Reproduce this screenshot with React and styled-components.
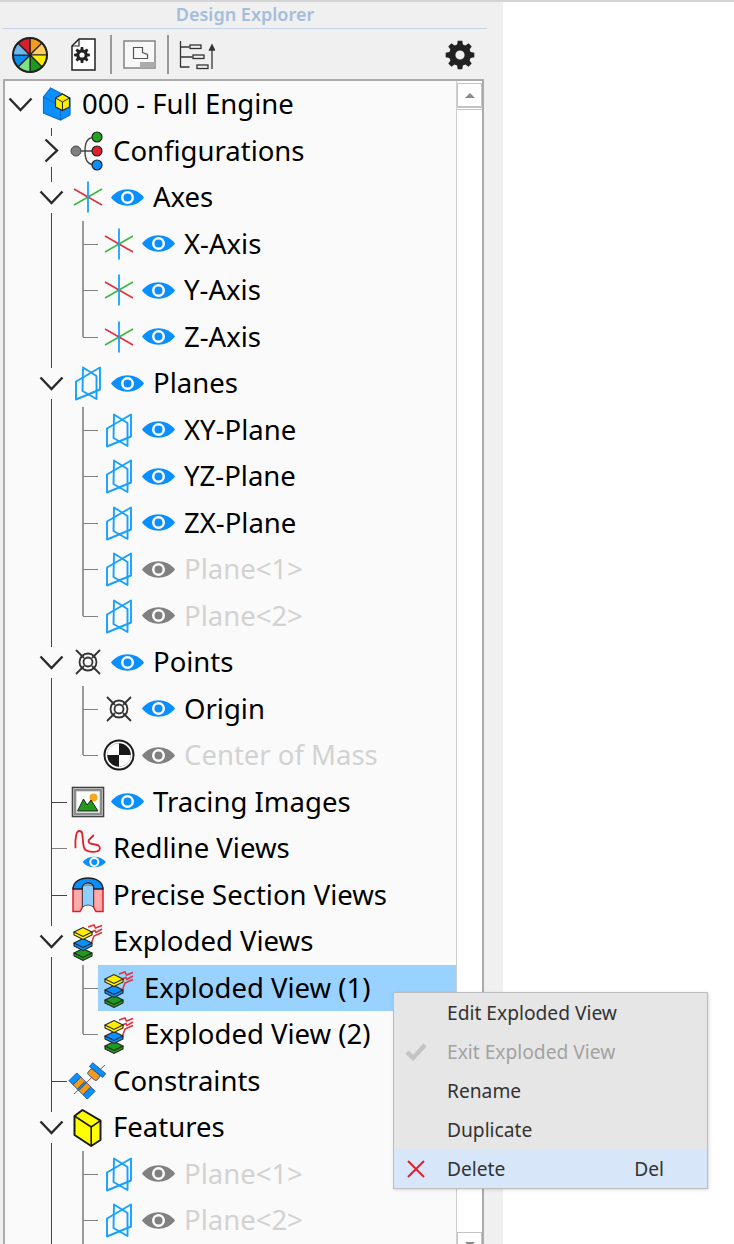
import React from "react";
import styled, { createGlobalStyle } from "styled-components";

const GlobalStyle = createGlobalStyle`
  html, body { margin: 0; padding: 0; background: #fff; }
  body { font-family: "Noto Sans", "Liberation Sans", sans-serif; }
`;

const BLUE = "#0a8fff";

function gearPath(cx, cy, ro, ri, hole, teeth = 8) {
  let d = "";
  const step = (Math.PI * 2) / teeth;
  for (let i = 0; i < teeth; i++) {
    const a = i * step;
    const pts = [
      [ri, a - step * 0.34],
      [ro, a - step * 0.2],
      [ro, a + step * 0.2],
      [ri, a + step * 0.34],
    ];
    pts.forEach(([r, t], j) => {
      const x = (cx + r * Math.sin(t)).toFixed(2);
      const y = (cy - r * Math.cos(t)).toFixed(2);
      d += `${i === 0 && j === 0 ? "M" : "L"}${x} ${y} `;
    });
  }
  d += `Z M${cx - hole} ${cy} a${hole} ${hole} 0 1 0 ${hole * 2} 0 a${hole} ${hole} 0 1 0 ${-hole * 2} 0 Z`;
  return d;
}

function wedge(r, from, to) {
  const p = (a) => {
    const t = (a * Math.PI) / 180;
    return `${(r * Math.sin(t)).toFixed(2)} ${(-r * Math.cos(t)).toFixed(2)}`;
  };
  return `M0 0 L${p(from)} A${r} ${r} 0 0 1 ${p(to)} Z`;
}

const WHEEL = ["#f59a1b", "#ffd060", "#ffee00", "#1c9a1c", "#7de38a", "#0a8cf0", "#6cb8f4", "#d4202a"];

function WheelIcon() {
  return (
    <svg width="38" height="38" viewBox="-19 -19 38 38">
      {WHEEL.map((c, i) => (
        <path key={c} d={wedge(17, i * 45, (i + 1) * 45)} fill={c} stroke="#222" strokeWidth="1.2" />
      ))}
      <circle r="17" fill="none" stroke="#222" strokeWidth="2" />
    </svg>
  );
}

function DocIcon() {
  return (
    <svg width="25" height="33" viewBox="0 0 25 33">
      <path d="M8 1h16v31H1V8z" fill="#fff" stroke="#222" strokeWidth="1.5" />
      <path d="M8 1v7H1" fill="none" stroke="#222" strokeWidth="1.2" />
      <path d={gearPath(11, 17, 8, 5.8, 2.6)} fill="#222" fillRule="evenodd" />
    </svg>
  );
}

function LayoutIcon() {
  return (
    <svg width="33" height="29" viewBox="0 0 33 29">
      <rect x="1" y="1" width="31" height="27" fill="#f8f8f8" stroke="#8a8a8a" strokeWidth="1.6" />
      <path d="M10.500 7.500h9v5l5 2v4h-14z" fill="none" stroke="#555" strokeWidth="1.2" />
      <rect x="17" y="22" width="15" height="5.500" fill="#ababab" />
    </svg>
  );
}

function TreeSortIcon() {
  return (
    <svg width="36" height="30" viewBox="0 0 36 30" fill="none" stroke="#333" strokeWidth="1.3">
      <path d="M1.500 1v26h9M1.500 7h9M1.500 17h12" />
      <rect x="11" y="5" width="11" height="3.500" />
      <rect x="14" y="15" width="11" height="3.500" />
      <rect x="18" y="25" width="11" height="3.500" />
      <path d="M33 29V8" />
      <path d="M30.500 10l2.500-5 2.500 5z" fill="#333" />
    </svg>
  );
}

function SettingsIcon() {
  return (
    <svg width="30" height="30" viewBox="0 0 30 30">
      <path d={gearPath(15, 15, 14.5, 11, 4.6)} fill="#222" fillRule="evenodd" />
    </svg>
  );
}

const Glyph = styled.svg`
  flex-shrink: 0;
  overflow: visible;
`;

function Icon({ children }) {
  return (
    <Glyph width="48" height="46" viewBox="-24 -23 48 46">
      {children}
    </Glyph>
  );
}

function PartIcon() {
  return (
    <Icon>
      <path d="M-6.500 -16L-13.500 -7V9L3.500 16L13 11V-6z" fill={BLUE} stroke="#0a6fc8" strokeWidth="1.2" />
      <path d="M-13.500 -7L3.500 2V16" fill="none" stroke="#0868bd" strokeWidth="1" />
      <path d="M5.500 -10L-1.500 -6V3L5.500 6.500L12.500 3V-6z" fill="#ffee00" stroke="#222" strokeWidth="1.2" />
      <path d="M-1.500 -6L5.500 -2L12.500 -6M5.500 -2V6.500" fill="none" stroke="#222" strokeWidth="1" />
    </Icon>
  );
}

function ConfigIcon() {
  return (
    <Icon>
      <path d="M-12 0H-3M-3 0C-3 -10 0 -14 8 -14M-3 0H8M-3 0C-3 10 0 14 8 14" fill="none" stroke="#444" strokeWidth="1.4" />
      <circle cx="-12" cy="0" r="5" fill="#808080" stroke="#444" strokeWidth="1" />
      <circle cx="9" cy="-14" r="5" fill="#22a31e" stroke="#222" strokeWidth="1.2" />
      <circle cx="9" cy="0" r="5" fill="#e0202a" stroke="#222" strokeWidth="1.2" />
      <circle cx="9" cy="14" r="5" fill={BLUE} stroke="#222" strokeWidth="1.2" />
    </Icon>
  );
}

function AxisIcon() {
  return (
    <Icon>
      <path d="M-14 8L14 -8" stroke="#3cb83c" strokeWidth="1.6" />
      <path d="M-14 -8L14 8" stroke="#e0303c" strokeWidth="1.6" />
      <path d="M0 -15.500V15.500" stroke="#18a0ff" strokeWidth="1.8" />
    </Icon>
  );
}

function PlaneIcon() {
  return (
    <Icon>
      <g fill="none" stroke="#18a0ff" strokeWidth="1.9" strokeLinejoin="round">
        <path d="M-12 -1.500L12 -15.500V6.500L-12 16.500z" />
        <path d="M-5 -15.500L8.500 -7V16L-5.500 8z" />
      </g>
    </Icon>
  );
}

function PointIcon() {
  return (
    <Icon>
      <g fill="none" stroke="#333" strokeWidth="1.8">
        <circle r="8.500" />
        <circle r="4.500" />
        <path d="M-12 -12L-4 -4M12 -12L4 -4M-12 12L-4 4M12 12L4 4" />
      </g>
    </Icon>
  );
}

function MassIcon() {
  return (
    <Icon>
      <circle r="15.500" fill="#1a1a1a" />
      <circle r="13.500" fill="#fff" />
      <circle r="11.800" fill="#1a1a1a" />
      <path d="M0 0V-11.800A11.800 11.800 0 0 0 -11.800 0z" fill="#fff" />
      <path d="M0 0V11.800A11.800 11.800 0 0 0 11.800 0z" fill="#fff" />
    </Icon>
  );
}

function ImageIcon() {
  return (
    <Icon>
      <rect x="-15.500" y="-14.500" width="31" height="29" fill="#fff" stroke="#444" strokeWidth="1.6" />
      <rect x="-13" y="-12" width="26" height="24" fill="#fff" stroke="#8c8c8c" strokeWidth="2.600" />
      <circle cx="5.500" cy="-4.500" r="4" fill="#f7a81b" />
      <path d="M-10.500 9L-4.500 -3L-1 3L3 -2L10 9z" fill="#1f9a1c" stroke="#222" strokeWidth="1" />
    </Icon>
  );
}

function RedlineIcon() {
  return (
    <Icon>
      <path
        d="M-12.500 0.300C-13 -6 -12.500 -10 -11.800 -13C-11 -16 -10 -17 -9 -17C-7 -17 -6 -16 -5.800 -14.700L-4.800 -4.700C-4.500 -1 -3.500 1 -2.500 2C0 3.700 4 4 7.500 3.700C10 3.400 11.800 2 11.800 0.300C11.800 -2 10 -3 9.200 -3L1.800 -4.700C0.500 -5.500 0.500 -7 0.800 -8L5.800 -13"
        fill="none"
        stroke="#e0202c"
        strokeWidth="1.800"
      />
      <path d="M-5.500 14C0 7 12 7 18 14C12 21 0 21 -5.500 14z" fill={BLUE} />
      <circle cx="6.300" cy="14" r="5" fill="#fff" />
      <circle cx="6.300" cy="14" r="3" fill={BLUE} />
    </Icon>
  );
}

function SectionIcon() {
  return (
    <Icon>
      <path d="M-15 -7H-5.500V12L-8 16.500H-15z" fill="#ffaaaa" stroke="#d8202c" strokeWidth="1.5" />
      <path d="M15 -7H5.500V12L8 16.500H15z" fill="#ffaaaa" stroke="#d8202c" strokeWidth="1.5" />
      <path d="M-5.500 -10H5.500V12Q0 8 -5.500 12z" fill="#8fcfff" stroke="#333" strokeWidth="0.8" />
      <path d="M-15 -6C-15 -13 -8 -17 0 -17C8 -17 15 -13 15 -6H6C6 -10 3 -12 0 -12C-3 -12 -6 -10 -6 -6z" fill={BLUE} stroke="#222" strokeWidth="1.300" />
    </Icon>
  );
}

function Slab({ cy, color }) {
  return (
    <g transform={`translate(-5 ${cy})`}>
      <path d="M-9 0V3L0 7.500L9 3V0" fill={color} stroke="#222" strokeWidth="1.1" />
      <path d="M-9 0L0 -4.500L9 0L0 4.500z" fill={color} stroke="#222" strokeWidth="1.1" />
    </g>
  );
}

function ExplodedIcon() {
  return (
    <Icon>
      <g fill="none" stroke="#e0303c" strokeWidth="1.500">
        <path d="M0 -14L6 -16L7.500 -13L14 -15.500" />
        <path d="M1 -8L7 -10.500L8 -8.500L14 -12" />
        <path d="M3.500 1.700L6 -5L14 -8.500" />
      </g>
      <Slab cy={12} color="#1f9a1c" />
      <Slab cy={2} color={BLUE} />
      <Slab cy={-9} color="#ffee00" />
    </Icon>
  );
}

function ConstraintIcon() {
  return (
    <Icon>
      <path d="M-14 13L17 -16" stroke="#e0303c" strokeWidth="1" />
      <g stroke="#1b4f80" strokeWidth="0.8">
        <g transform="translate(-6 5) rotate(45)">
          <rect x="-13" y="-5.500" width="6" height="11" fill={BLUE} />
          <rect x="-7" y="-5.500" width="6" height="11" fill="#f59a1b" />
          <rect x="-1" y="-5.500" width="2" height="11" fill={BLUE} />
          <rect x="1" y="-5.500" width="6" height="11" fill="#f59a1b" />
          <rect x="7" y="-5.500" width="6" height="11" fill={BLUE} />
        </g>
        <g transform="translate(8 -9) rotate(40)">
          <rect x="-6" y="0" width="12" height="7" rx="2" fill="#f59a1b" />
          <rect x="-8.500" y="-5" width="17" height="5" fill={BLUE} />
        </g>
      </g>
    </Icon>
  );
}

function FeatureIcon() {
  return (
    <Icon>
      <path d="M-5.500 -17L-13.500 -11V8L3.200 19L12.500 13V-6.300z" fill="#ffff00" stroke="#1a1a1a" strokeWidth="2" strokeLinejoin="round" />
      <path d="M-13.500 -11L3.200 0L12.500 -6.300M3.200 0V19" fill="none" stroke="#1a1a1a" strokeWidth="1.600" />
    </Icon>
  );
}

function Eye({ $off }) {
  const fill = $off ? "#808080" : BLUE;
  return (
    <svg width="33" height="17" viewBox="0 0 33 17">
      <path d="M0 8.500C8 -2.500 25 -2.500 33 8.500C25 19.500 8 19.500 0 8.500z" fill={fill} />
      <circle cx="16.500" cy="8.500" r="6.500" fill="#fff" />
      <circle cx="16.500" cy="8.500" r="4" fill={fill} />
    </svg>
  );
}

const Page = styled.div`
  height: 100vh;
  overflow: hidden;
  border-top: 2px solid #d4d4d4;
  box-sizing: border-box;
  position: relative;
`;

const Panel = styled.div`
  width: 503px;
  height: 1258px;
  box-sizing: border-box;
  padding: 0 19px 0 3px;
  background: #f0f0f0;
  display: flex;
  flex-direction: column;
`;

const Title = styled.div`
  height: 26px;
  margin-right: -3px;
  border-bottom: 1px solid #c5d3e6;
  text-align: center;
  font-size: 18px;
  font-weight: 600;
  line-height: 25px;
  color: #a3bedd;
`;

const Toolbar = styled.div`
  height: 50px;
  box-sizing: border-box;
  padding-top: 1px;
  display: flex;
  align-items: center;
`;

const ToolSlot = styled.div`
  display: flex;
  margin-left: ${(p) => p.$gap}px;
`;

const ToolGear = styled.div`
  display: flex;
  margin-left: auto;
  margin-right: 9px;
`;

const ToolDivider = styled.div`
  width: 2px;
  height: 39px;
  background: #9a9a9a;
  margin-left: ${(p) => p.$gap}px;
`;

const TreeBox = styled.div`
  flex: 1;
  min-height: 0;
  display: flex;
  border: 2px solid #ababab;
  background: #fafafa;
`;

const List = styled.div`
  flex: 1;
  min-width: 0;
  overflow: hidden;
`;

const ScrollBar = styled.div`
  width: 26px;
  box-sizing: border-box;
  flex-shrink: 0;
  background: #fff;
  border-left: 1px solid #cfcfcf;
  padding: 2px 0 1px;
  display: flex;
  flex-direction: column;
`;

const ScrollButton = styled.div`
  height: 25px;
  flex-shrink: 0;
  box-sizing: border-box;
  border: 1px solid #c4c4c4;
  border-bottom-width: 2px;
  background: #fff;
  display: flex;
  align-items: center;
  justify-content: center;
  &::after {
    content: "";
    border-left: 5px solid transparent;
    border-right: 5px solid transparent;
    border-${(p) => (p.$down ? "top" : "bottom")}: 5px solid #8a8a8a;
  }
`;

const ScrollTrack = styled.div`
  flex: 1;
  margin-top: 1px;
  border-top: 1px solid #c4c4c4;
  border-bottom: 1px solid #fff;
`;

const RowShell = styled.div`
  position: relative;
  height: 46.5px;
  display: flex;
  padding-left: ${(p) => p.$level * 31}px;
`;

const ChevronSlot = styled.div`
  width: 31px;
  flex-shrink: 0;
  display: flex;
  align-items: center;
  justify-content: center;
`;

const RowBody = styled.div`
  flex: 1;
  min-width: 0;
  display: flex;
  align-items: center;
  background: ${(p) => (p.$selected ? "#99d1ff" : "transparent")};
`;

const IconSlot = styled.div`
  width: 41px;
  flex-shrink: 0;
  display: flex;
  align-items: center;
  justify-content: center;
`;

const EyeSlot = styled.div`
  width: 40px;
  box-sizing: border-box;
  flex-shrink: 0;
  padding-left: 3px;
  display: flex;
  align-items: center;
`;

const Label = styled.span`
  margin-left: 5px;
  font-size: 27.5px;
  line-height: 44px;
  white-space: nowrap;
  color: ${(p) => (p.$muted ? "#d2d2d2" : "#000")};
`;

const Rail = styled.div`
  position: absolute;
  left: ${(p) => (p.$inner ? 77 : 46)}px;
  width: ${(p) => (p.$inner ? 2 : 1)}px;
  top: ${(p) => p.$top};
  bottom: ${(p) => p.$bottom};
  background: ${(p) => (p.$inner ? "#9a9a9a" : "#444")};
`;

const Stub = styled.div`
  position: absolute;
  top: 50%;
  height: 1px;
  left: ${(p) => (p.$inner ? 78 : 47)}px;
  width: 15px;
  background: ${(p) => (p.$inner || p.$soft ? "#808080" : "#444")};
`;

const Menu = styled.div`
  position: absolute;
  left: 393px;
  top: 990px;
  width: 315px;
  box-sizing: border-box;
  border: 1px solid #bdbdbd;
  background: #e6e6e6;
  box-shadow: 1px 1px 3px rgba(0, 0, 0, 0.15);
`;

const MenuItem = styled.div`
  height: 39px;
  display: flex;
  align-items: center;
  font-size: 19.2px;
  padding-left: 1px;
  color: ${(p) => (p.$disabled ? "#a2a2a2" : "#333")};
  background: ${(p) => (p.$active ? "#d8e6f9" : "transparent")};
`;

const MenuIcon = styled.div`
  width: 42px;
  margin-right: 10px;
  flex-shrink: 0;
  display: flex;
  justify-content: center;
`;

const MenuShortcut = styled.span`
  margin-left: auto;
  margin-right: 43px;
`;

const ROWS = [
  { level: 0, chevron: "down", Art: PartIcon, label: "000 - Full Engine" },
  { level: 1, chevron: "right", Art: ConfigIcon, label: "Configurations" },
  { level: 1, chevron: "down", Art: AxisIcon, eye: "on", label: "Axes" },
  { level: 2, Art: AxisIcon, eye: "on", label: "X-Axis" },
  { level: 2, Art: AxisIcon, eye: "on", label: "Y-Axis" },
  { level: 2, Art: AxisIcon, eye: "on", label: "Z-Axis", last: true },
  { level: 1, chevron: "down", Art: PlaneIcon, eye: "on", label: "Planes" },
  { level: 2, Art: PlaneIcon, eye: "on", label: "XY-Plane" },
  { level: 2, Art: PlaneIcon, eye: "on", label: "YZ-Plane" },
  { level: 2, Art: PlaneIcon, eye: "on", label: "ZX-Plane" },
  { level: 2, Art: PlaneIcon, eye: "off", label: "Plane<1>", muted: true },
  { level: 2, Art: PlaneIcon, eye: "off", label: "Plane<2>", muted: true, last: true },
  { level: 1, chevron: "down", Art: PointIcon, eye: "on", label: "Points" },
  { level: 2, Art: PointIcon, eye: "on", label: "Origin" },
  { level: 2, Art: MassIcon, eye: "off", label: "Center of Mass", muted: true, last: true },
  { level: 1, Art: ImageIcon, eye: "on", label: "Tracing Images" },
  { level: 1, Art: RedlineIcon, label: "Redline Views", soft: true },
  { level: 1, Art: SectionIcon, label: "Precise Section Views" },
  { level: 1, chevron: "down", Art: ExplodedIcon, label: "Exploded Views" },
  { level: 2, Art: ExplodedIcon, label: "Exploded View (1)", selected: true },
  { level: 2, Art: ExplodedIcon, label: "Exploded View (2)", last: true },
  { level: 1, Art: ConstraintIcon, label: "Constraints" },
  { level: 1, chevron: "down", Art: FeatureIcon, label: "Features" },
  { level: 2, Art: PlaneIcon, eye: "off", label: "Plane<1>", muted: true },
  { level: 2, Art: PlaneIcon, eye: "off", label: "Plane<2>", muted: true },
];

function Chevron({ dir }) {
  if (dir === "right") {
    return (
      <svg width="15" height="25" viewBox="0 0 15 25" fill="none" stroke="#2a2a2a" strokeWidth="2.4">
        <path d="M1.500 1.500L13 12.500L1.500 23.500" />
      </svg>
    );
  }
  return (
    <svg width="25" height="15" viewBox="0 0 25 15" fill="none" stroke="#2a2a2a" strokeWidth="2.4">
      <path d="M1.500 1.500L12.500 13L23.500 1.500" />
    </svg>
  );
}

function Guides({ row }) {
  if (row.level === 0) return null;
  if (row.chevron) {
    return (
      <>
        <Rail $top="0" $bottom="calc(50% + 15px)" />
        <Rail $top="calc(50% + 16px)" $bottom="0" />
      </>
    );
  }
  if (row.level === 1) {
    return (
      <>
        <Rail $top="0" $bottom="0" />
        <Stub $soft={row.soft} />
      </>
    );
  }
  return (
    <>
      <Rail $top="0" $bottom="0" />
      <Rail $inner $top="0" $bottom={row.last ? "50%" : "0"} />
      <Stub $inner />
    </>
  );
}

function TreeRow({ row }) {
  const { Art } = row;
  return (
    <RowShell $level={row.level}>
      <Guides row={row} />
      <ChevronSlot>{row.chevron && <Chevron dir={row.chevron} />}</ChevronSlot>
      <RowBody $selected={row.selected}>
        <IconSlot>
          <Art />
        </IconSlot>
        {row.eye && (
          <EyeSlot>
            <Eye $off={row.eye === "off"} />
          </EyeSlot>
        )}
        <Label $muted={row.muted}>{row.label}</Label>
      </RowBody>
    </RowShell>
  );
}

export default function App() {
  return (
    <Page>
      <GlobalStyle />
      <Panel>
        <Title>Design Explorer</Title>
        <Toolbar>
          <ToolSlot $gap={8}>
            <WheelIcon />
          </ToolSlot>
          <ToolSlot $gap={22}>
            <DocIcon />
          </ToolSlot>
          <ToolDivider $gap={14} />
          <ToolSlot $gap={11}>
            <LayoutIcon />
          </ToolSlot>
          <ToolDivider $gap={11} />
          <ToolSlot $gap={10}>
            <TreeSortIcon />
          </ToolSlot>
          <ToolGear>
            <SettingsIcon />
          </ToolGear>
        </Toolbar>
        <TreeBox>
          <List>
            {ROWS.map((row, i) => (
              <TreeRow key={i} row={row} />
            ))}
          </List>
          <ScrollBar>
            <ScrollButton />
            <ScrollTrack />
            <ScrollButton $down />
          </ScrollBar>
        </TreeBox>
      </Panel>
      <Menu>
        <MenuItem>
          <MenuIcon />
          Edit Exploded View
        </MenuItem>
        <MenuItem $disabled>
          <MenuIcon>
            <svg width="22" height="20" viewBox="0 0 22 20" fill="none" stroke="#c4c4c4" strokeWidth="4.500">
              <path d="M2 10L8 16L20 3" />
            </svg>
          </MenuIcon>
          Exit Exploded View
        </MenuItem>
        <MenuItem>
          <MenuIcon />
          Rename
        </MenuItem>
        <MenuItem>
          <MenuIcon />
          Duplicate
        </MenuItem>
        <MenuItem $active>
          <MenuIcon>
            <svg width="20" height="20" viewBox="0 0 20 20" fill="none" stroke="#e0202c" strokeWidth="2">
              <path d="M2 2L18 18M18 2L2 18" />
            </svg>
          </MenuIcon>
          Delete
          <MenuShortcut>Del</MenuShortcut>
        </MenuItem>
      </Menu>
    </Page>
  );
}
